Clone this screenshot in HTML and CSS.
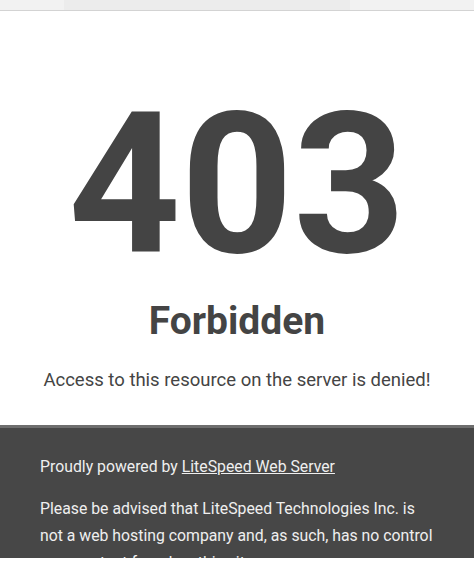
FILE: index.html
```html
<!DOCTYPE html>
<html lang="en">
<head>
  <meta charset="utf-8">
  <meta name="viewport" content="width=device-width,initial-scale=1">
  <title>403 Forbidden</title>
  <link rel="stylesheet" href="styles.css">
</head>
<body>

  <div class="topbar"><span class="topbar-tab"></span></div>

  <div class="error">
    <h1 class="code">403</h1>
    <h2 class="title">Forbidden</h2>
    <p class="message">Access to this resource on the server is denied!</p>
  </div>

  <footer>
    <p>Proudly powered by <a href="#">LiteSpeed Web Server</a></p>
    <p class="notice">Please be advised that LiteSpeed Technologies Inc. is not a web hosting company and, as such, has no control over content found on this site.</p>
  </footer>

</body>
</html>
```

FILE: styles.css
```css
:root {
  --text-dark:  #444444;
  --footer-bg:  #474747;
  --footer-top: #6e6e6e;
  --footer-txt: #efefef;
}
* { margin:0; padding:0; box-sizing:border-box; }
body {
  font-family:Roboto,'Liberation Sans',sans-serif;
  background:#ffffff;
  color:var(--text-dark);
}
.topbar {
  height:11px;
  background:#f2f2f2;
  border-bottom:1px solid #d3d3d3;
  padding-left:64px;
}
.topbar-tab {
  display:block;
  width:286px; height:10px;
  background:#ececec;
}
.error { text-align:center; }
.code {
  font-size:196px; line-height:196px; font-weight:700;
  margin-top:76px;
}
.title {
  font-size:39px; line-height:46px; font-weight:700;
  margin-top:15px;
}
.message {
  font-size:18.5px; line-height:27px;
  margin-top:23px;
}
footer {
  margin-top:31px;
  height:133px;
  background:var(--footer-bg);
  border-top:3px solid var(--footer-top);
  color:var(--footer-txt);
  padding:25px 38px 0 40px;
  font-size:15.8px; line-height:27px;
}
footer a { color:var(--footer-txt); }
footer .notice { margin-top:15px; }
```
